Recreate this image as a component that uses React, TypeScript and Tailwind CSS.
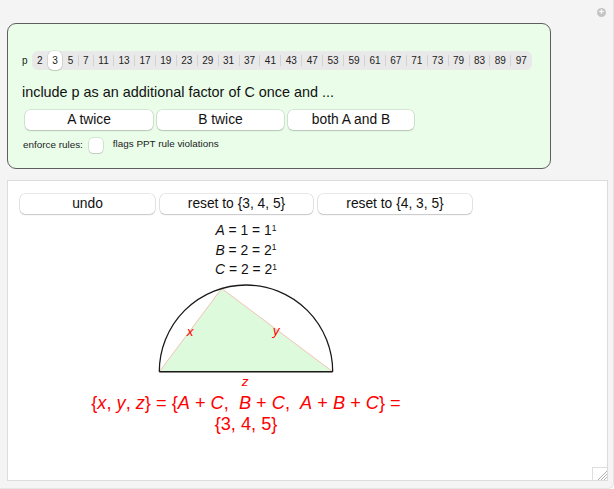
import React from "react";

const primes = [2, 3, 5, 7, 11, 13, 17, 19, 23, 29, 31, 37, 41, 43, 47, 53, 59, 61, 67, 71, 73, 79, 83, 89, 97];
const selected = 3;

function Btn({ label, className }: { label: string; className: string }) {
  return (
    <button
      className={`h-[20px] rounded-[5px] bg-white text-[13.8px] leading-none text-[#111] shadow-[0_0_0_0.5px_rgba(0,0,0,0.18),0_1px_1.5px_rgba(0,0,0,0.14)] ${className}`}
    >
      {label}
    </button>
  );
}

function PrimeBar() {
  return (
    <div className="flex h-[19px] items-center rounded-[6px] bg-[#e9e9e9] px-[1px]">
      {primes.map((p, i) => {
        const isSel = p === selected;
        const prevSel = i > 0 && primes[i - 1] === selected;
        return (
          <React.Fragment key={p}>
            {i > 0 &&
              (isSel || prevSel ? (
                <span className="w-px" />
              ) : (
                <span className="h-[11px] w-px bg-[#d2d2d2]" />
              ))}
            <span
              className={`flex h-[19px] items-center px-[4.4px] text-[10px] text-[#222] ${
                isSel ? "rounded-[5px] bg-white shadow-[0_0_0_0.5px_rgba(0,0,0,0.15),0_1px_1px_rgba(0,0,0,0.12)]" : ""
              }`}
            >
              {p}
            </span>
          </React.Fragment>
        );
      })}
    </div>
  );
}

function Figure() {
  const cx = 226;
  const cy = 91.7;
  const r = 86.7;
  return (
    <svg width="452" height="113" viewBox="0 0 452 113" className="block">
      <polygon
        points={`${cx - r},${cy} 201.7,8.5 ${cx + r},${cy}`}
        fill="#ddfadd"
        stroke="#f0b4a4"
        strokeWidth="0.8"
      />
      <path
        d={`M ${cx - r} ${cy} A ${r} ${r} 0 0 1 ${cx + r} ${cy}`}
        fill="none"
        stroke="#1a1a1a"
        strokeWidth="1.3"
      />
      <line x1={cx - r} y1={cy} x2={cx + r} y2={cy} stroke="#1a1a1a" strokeWidth="1.6" />
      <g fill="#ff0000" fontSize="13.5" fontStyle="italic" textAnchor="middle" fontFamily="'Liberation Sans', Arial, sans-serif">
        <text x="170" y="56">x</text>
        <text x="256" y="55">y</text>
        <text x="225" y="106">z</text>
      </g>
    </svg>
  );
}

export default function App() {
  return (
    <div className="relative h-[489px] w-[614px] overflow-hidden rounded-br-[6px] border-r border-b border-[#e4e4e4] bg-[#f4f4f4] font-['Liberation_Sans',Arial,sans-serif]">
      <span className="absolute right-[7px] top-[8px] flex h-[9px] w-[9px] items-center justify-center rounded-full bg-[#c4c4c4] text-[9px] font-bold leading-none text-white">
        +
      </span>

      <div className="ml-[7px] mt-[23px] h-[146px] w-[544px] rounded-[9px] border border-[#5e5e5e] bg-[#e9fde9] pl-[14px] pt-[27px]">
        <div className="flex items-center gap-[4px]">
          <span className="text-[10px] text-[#222]">p</span>
          <PrimeBar />
        </div>

        <p className="mt-[14px] text-[14.4px] leading-[16px] text-[#111]">
          include p as an additional factor of C once and ...
        </p>

        <div className="ml-[3px] mt-[10px] flex gap-[4px]">
          <Btn label="A twice" className="w-[128px]" />
          <Btn label="B twice" className="w-[127px]" />
          <Btn label="both A and B" className="w-[126px]" />
        </div>

        <div className="mt-[8px] flex items-center text-[9.9px] text-[#222]">
          <span className="ml-[1px]">enforce rules:</span>
          <span className="ml-[6px] h-[15px] w-[14px] rounded-[4px] bg-white shadow-[0_0_0_0.5px_rgba(0,0,0,0.2),0_1px_1px_rgba(0,0,0,0.1)]" />
          <span className="ml-[10px] -mt-[2px]">flags PPT rule violations</span>
        </div>
      </div>

      <div className="relative ml-[7px] mt-[11px] h-[301px] w-[601px] border border-[#dcdcdc] bg-white pl-[12px] pt-[13px]">
        <div className="flex w-[452px] flex-col items-center">
          <div className="flex gap-[5px]">
            <Btn label="undo" className="w-[135px]" />
            <Btn label="reset to {3, 4, 5}" className="w-[153px]" />
            <Btn label="reset to {4, 3, 5}" className="w-[154px]" />
          </div>

          <div className="mt-[7px] flex flex-col items-center text-[13.9px] leading-[19.5px] text-[#111]">
            <span>
              <i>A</i> = 1 = 1<sup className="text-[8.5px]">1</sup>
            </span>
            <span>
              <i>B</i> = 2 = 2<sup className="text-[8.5px]">1</sup>
            </span>
            <span>
              <i>C</i> = 2 = 2<sup className="text-[8.5px]">1</sup>
            </span>
          </div>

          <Figure />

          <div className="flex flex-col items-center whitespace-pre text-[18.2px] leading-[21.5px] text-[#ff0000]">
            <span>
              {"{"}<i>x</i>, <i>y</i>, <i>z</i>{"}"} = {"{"}<i>A</i> + <i>C</i>,  <i>B</i> + <i>C</i>,  <i>A</i> + <i>B</i> + <i>C</i>{"}"} =
            </span>
            <span>{"{3, 4, 5}"}</span>
          </div>
        </div>

        <div className="absolute bottom-0 right-0 h-[13px] w-[15px] border-l border-t border-[#dedede] bg-white">
          <svg width="14" height="12" viewBox="0 0 14 12" className="block">
            <g stroke="#9a9a9a" strokeWidth="0.8">
              <line x1="5" y1="12" x2="14" y2="3" />
              <line x1="8" y1="12" x2="14" y2="6" />
              <line x1="11" y1="12" x2="14" y2="9" />
            </g>
          </svg>
        </div>
      </div>
    </div>
  );
}
